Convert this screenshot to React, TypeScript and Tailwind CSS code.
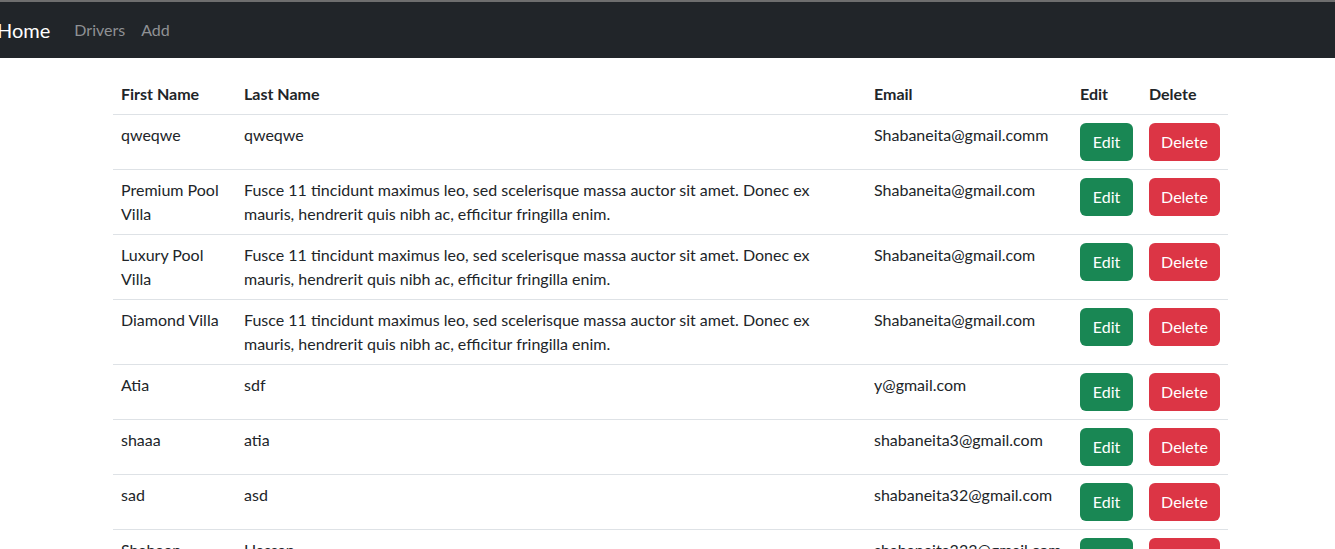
import React from "react";

type Row = { first: string[]; last: string[]; email: string };

const desc = [
  "Fusce 11 tincidunt maximus leo, sed scelerisque massa auctor sit amet. Donec ex",
  "mauris, hendrerit quis nibh ac, efficitur fringilla enim.",
];

const rows: Row[] = [
  { first: ["qweqwe"], last: ["qweqwe"], email: "Shabaneita@gmail.comm" },
  { first: ["Premium Pool", "Villa"], last: desc, email: "Shabaneita@gmail.com" },
  { first: ["Luxury Pool", "Villa"], last: desc, email: "Shabaneita@gmail.com" },
  { first: ["Diamond Villa"], last: desc, email: "Shabaneita@gmail.com" },
  { first: ["Atia"], last: ["sdf"], email: "y@gmail.com" },
  { first: ["shaaa"], last: ["atia"], email: "shabaneita3@gmail.com" },
  { first: ["sad"], last: ["asd"], email: "shabaneita32@gmail.com" },
  { first: ["Shaheen"], last: ["Hassan"], email: "shabaneita333@gmail.com" },
];

function Lines({ lines }: { lines: string[] }) {
  return (
    <>
      {lines.map((l, i) => (
        <div key={i} className="whitespace-nowrap">
          {l}
        </div>
      ))}
    </>
  );
}

export default function App() {
  return (
    <div
      className="min-h-screen bg-white text-[16px] leading-6 text-[#212529]"
      style={{ fontFamily: "Lato, 'Noto Sans', sans-serif" }}
    >
      <div className="h-[2px] bg-[#6e6e6e]" />
      <nav className="flex h-[56px] items-center bg-[#212529]">
        <span className="-ml-[3px] mr-4 text-[20px] leading-[30px] text-white">Home</span>
        <a className="px-2 py-2 text-[#8f9194]">Drivers</a>
        <a className="px-2 py-2 text-[#8f9194]">Add</a>
      </nav>
      <div className="ml-[113px] mt-4 w-[1115px]">
        <table className="w-full table-fixed border-collapse">
          <colgroup>
            <col className="w-[123px]" />
            <col className="w-[630px]" />
            <col className="w-[206px]" />
            <col className="w-[69px]" />
            <col className="w-[87px]" />
          </colgroup>
          <thead>
            <tr className="border-b border-[#dee2e6]">
              <th className="p-2 text-left align-bottom font-bold">First Name</th>
              <th className="p-2 text-left align-bottom font-bold">Last Name</th>
              <th className="p-2 text-left align-bottom font-bold">Email</th>
              <th className="p-2 text-left align-bottom font-bold">Edit</th>
              <th className="p-2 text-left align-bottom font-bold">Delete</th>
            </tr>
          </thead>
          <tbody>
            {rows.map((r, i) => (
              <tr key={i} className="border-b border-[#dee2e6]">
                <td className="p-2 align-top">
                  <Lines lines={r.first} />
                </td>
                <td className="p-2 align-top">
                  <Lines lines={r.last} />
                </td>
                <td className="p-2 align-top whitespace-nowrap">{r.email}</td>
                <td className="p-2 align-top">
                  <button className="h-[38px] w-[53px] rounded-md bg-[#198754] text-white">
                    Edit
                  </button>
                </td>
                <td className="p-2 align-top">
                  <button className="h-[38px] w-[71px] rounded-md bg-[#dc3545] text-white">
                    Delete
                  </button>
                </td>
              </tr>
            ))}
          </tbody>
        </table>
      </div>
    </div>
  );
}
